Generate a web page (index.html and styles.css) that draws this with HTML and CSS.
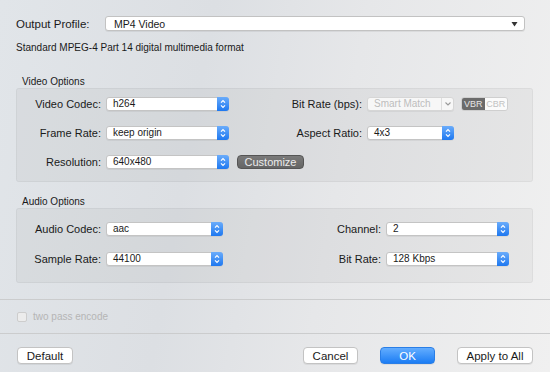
FILE: index.html
```html
<!DOCTYPE html>
<html lang="en">

<head>
    <title>Output Profile</title>
    <link rel="stylesheet" href="styles.css">
</head>

<body>
    <div class="window">
        <div class="profile">
            <span class="profile_label">Output Profile:</span>
            <div class="combo">
                <span>MP4 Video</span>
                <svg class="combo_arrow" width="7" height="6" viewBox="0 0 7 6"><path d="M0.5 1 L6.5 1 L3.5 5.5 Z" fill="#333"/></svg>
            </div>
        </div>
        <p class="desc">Standard MPEG-4 Part 14 digital multimedia format</p>

        <h3 class="group_title">Video Options</h3>
        <div class="box video">
            <label class="lbl">Video Codec:</label>
            <div class="sel"><span>h264</span><span class="step"><svg width="12" height="14" viewBox="0 0 12 14"><path d="M4 5.6 L6 3.6 L8 5.6 M4 8.4 L6 10.4 L8 8.4" stroke="#fff" stroke-width="1.2" fill="none"/></svg></span></div>
            <label class="lbl">Bit Rate (bps):</label>
            <div class="sel sel_off"><span>Smart Match</span><span class="drop"><svg width="8" height="6" viewBox="0 0 8 6"><path d="M1.5 1.5 L4 4 L6.5 1.5" stroke="#9a9a9a" stroke-width="1.1" fill="none"/></svg></span></div>
            <div class="seg"><span class="seg_on">VBR</span><span class="seg_off">CBR</span></div>

            <label class="lbl">Frame Rate:</label>
            <div class="sel"><span>keep origin</span><span class="step"><svg width="12" height="14" viewBox="0 0 12 14"><path d="M4 5.6 L6 3.6 L8 5.6 M4 8.4 L6 10.4 L8 8.4" stroke="#fff" stroke-width="1.2" fill="none"/></svg></span></div>
            <label class="lbl">Aspect Ratio:</label>
            <div class="sel"><span>4x3</span><span class="step"><svg width="12" height="14" viewBox="0 0 12 14"><path d="M4 5.6 L6 3.6 L8 5.6 M4 8.4 L6 10.4 L8 8.4" stroke="#fff" stroke-width="1.2" fill="none"/></svg></span></div>
            <div></div>

            <label class="lbl">Resolution:</label>
            <div class="sel"><span>640x480</span><span class="step"><svg width="12" height="14" viewBox="0 0 12 14"><path d="M4 5.6 L6 3.6 L8 5.6 M4 8.4 L6 10.4 L8 8.4" stroke="#fff" stroke-width="1.2" fill="none"/></svg></span></div>
            <div class="cust_cell"><button class="cust">Customize</button></div>
        </div>

        <h3 class="group_title audio_title">Audio Options</h3>
        <div class="box audio">
            <label class="lbl">Audio Codec:</label>
            <div class="sel"><span>aac</span><span class="step"><svg width="12" height="14" viewBox="0 0 12 14"><path d="M4 5.6 L6 3.6 L8 5.6 M4 8.4 L6 10.4 L8 8.4" stroke="#fff" stroke-width="1.2" fill="none"/></svg></span></div>
            <label class="lbl">Channel:</label>
            <div class="sel"><span>2</span><span class="step"><svg width="12" height="14" viewBox="0 0 12 14"><path d="M4 5.6 L6 3.6 L8 5.6 M4 8.4 L6 10.4 L8 8.4" stroke="#fff" stroke-width="1.2" fill="none"/></svg></span></div>

            <label class="lbl">Sample Rate:</label>
            <div class="sel"><span>44100</span><span class="step"><svg width="12" height="14" viewBox="0 0 12 14"><path d="M4 5.6 L6 3.6 L8 5.6 M4 8.4 L6 10.4 L8 8.4" stroke="#fff" stroke-width="1.2" fill="none"/></svg></span></div>
            <label class="lbl">Bit Rate:</label>
            <div class="sel"><span>128 Kbps</span><span class="step"><svg width="12" height="14" viewBox="0 0 12 14"><path d="M4 5.6 L6 3.6 L8 5.6 M4 8.4 L6 10.4 L8 8.4" stroke="#fff" stroke-width="1.2" fill="none"/></svg></span></div>
        </div>

        <div class="line"></div>
        <div class="check_row">
            <span class="check"></span>
            <span class="check_text">two pass encode</span>
        </div>
        <div class="line"></div>

        <div class="btns">
            <button class="btn btn_default">Default</button>
            <button class="btn btn_cancel">Cancel</button>
            <button class="btn btn_ok">OK</button>
            <button class="btn btn_all">Apply to All</button>
        </div>
    </div>
</body>

</html>
```

FILE: styles.css
```css
* {
    margin: 0;
    padding: 0;
    box-sizing: border-box;
}

body {
    width: 550px;
    height: 372px;
    overflow: hidden;
    font-family: "Liberation Sans", Arial, sans-serif;
    color: #1a1a1a;
}

.window {
    width: 550px;
    height: 372px;
    background: linear-gradient(100deg, #e1e5e9 0%, #dcdfe3 35%, #e6e7e9 60%, #f0f0f0 100%);
}

.profile {
    display: flex;
    align-items: center;
    padding: 16px 25px 0 16px;
}

.profile_label {
    width: 89px;
    font-size: 11.5px;
}

.combo {
    flex: 1;
    height: 15px;
    display: flex;
    align-items: center;
    justify-content: space-between;
    padding: 0 6px 0 8px;
    background: #fff;
    border: 1px solid #c2c2c2;
    border-radius: 3px;
    box-shadow: 0 1px 0 rgba(0, 0, 0, 0.06);
    font-size: 10.5px;
}

.desc {
    margin-top: 10px;
    padding-left: 16px;
    font-size: 10px;
    line-height: 14px;
}

.group_title {
    margin-top: 20px;
    padding-left: 22px;
    font-size: 10px;
    font-weight: normal;
    line-height: 13px;
}

.audio_title {
    margin-top: 14px;
    line-height: 12px;
}

.box {
    margin: 0 17px 0 16px;
    display: grid;
    align-items: center;
    background: rgba(0, 0, 0, 0.035);
    border: 1px solid rgba(0, 0, 0, 0.045);
    border-radius: 3px;
}

.video {
    grid-template-columns: 84px 123px 128px 87px auto;
    column-gap: 5px;
    row-gap: 15px;
    grid-auto-rows: 14px;
    padding: 8px 0 12px;
}

.audio {
    grid-template-columns: 84px 117px 153px 123px;
    column-gap: 5px;
    row-gap: 16px;
    grid-auto-rows: 14px;
    padding: 13px 0 16px;
}

.lbl {
    text-align: right;
    font-size: 11px;
    white-space: nowrap;
}

.sel {
    height: 14px;
    display: flex;
    align-items: stretch;
    background: #fff;
    border: 1px solid #c4c4c4;
    border-radius: 3px;
    font-size: 10px;
    box-shadow: 0 1px 0 rgba(0, 0, 0, 0.05);
}

.sel span:first-child {
    flex: 1;
    padding-left: 6px;
    line-height: 12px;
}

.step {
    width: 12px;
    margin: -1px -1px -1px 0;
    border-radius: 0 3px 3px 0;
    background: linear-gradient(#6aacfb, #1e78f0);
    display: flex;
    align-items: center;
}

.sel_off {
    background: #f7f7f7;
    border-color: #d6d6d6;
    color: #bdbdbd;
}

.drop {
    width: 12px;
    border-left: 1px solid #dedede;
    display: flex;
    align-items: center;
    justify-content: center;
}

.seg {
    margin-left: 2px;
    display: flex;
    height: 14px;
    font-size: 9px;
    border-radius: 3px;
    overflow: hidden;
    border: 1px solid #cfcfcf;
    width: 47px;
}

.seg span {
    flex: 1;
    text-align: center;
    line-height: 12px;
}

.seg_on {
    background: #6b6b6b;
    color: #e6e6e6;
}

.seg_off {
    background: #fbfbfb;
    color: #c2c2c2;
}

.cust_cell {
    display: flex;
}

.cust {
    margin-left: 3px;
    width: 67px;
    height: 14px;
    font-family: inherit;
    font-size: 11px;
    color: #ececec;
    background: linear-gradient(#7a7a7a, #656565);
    border: 1px solid #555;
    border-radius: 4px;
}

.line {
    height: 1px;
    background: #cbcccd;
}

.box.audio + .line {
    margin-top: 16px;
}

.check_row {
    height: 33px;
    display: flex;
    align-items: center;
    padding-left: 17px;
}

.check {
    width: 10px;
    height: 10px;
    border: 1px solid #cdcdcd;
    border-radius: 2px;
    background: #ececec;
}

.check_text {
    margin-left: 6px;
    font-size: 10px;
    color: #b5b5b5;
}

.btns {
    display: flex;
    align-items: center;
    padding: 13px 17px 0 17px;
}

.btn {
    height: 17px;
    font-family: inherit;
    font-size: 11.5px;
    color: #1a1a1a;
    background: #fff;
    border: 1px solid #c3c3c3;
    border-radius: 4px;
    box-shadow: 0 1px 0 rgba(0, 0, 0, 0.06);
}

.btn_default {
    width: 56px;
}

.btn_cancel {
    margin-left: auto;
    width: 55px;
}

.btn_ok {
    margin-left: 22px;
    width: 55px;
    color: #fff;
    background: linear-gradient(#63adff, #1c7df4);
    border-color: #2a7ee6;
}

.btn_all {
    margin-left: 22px;
    width: 76px;
}
```
